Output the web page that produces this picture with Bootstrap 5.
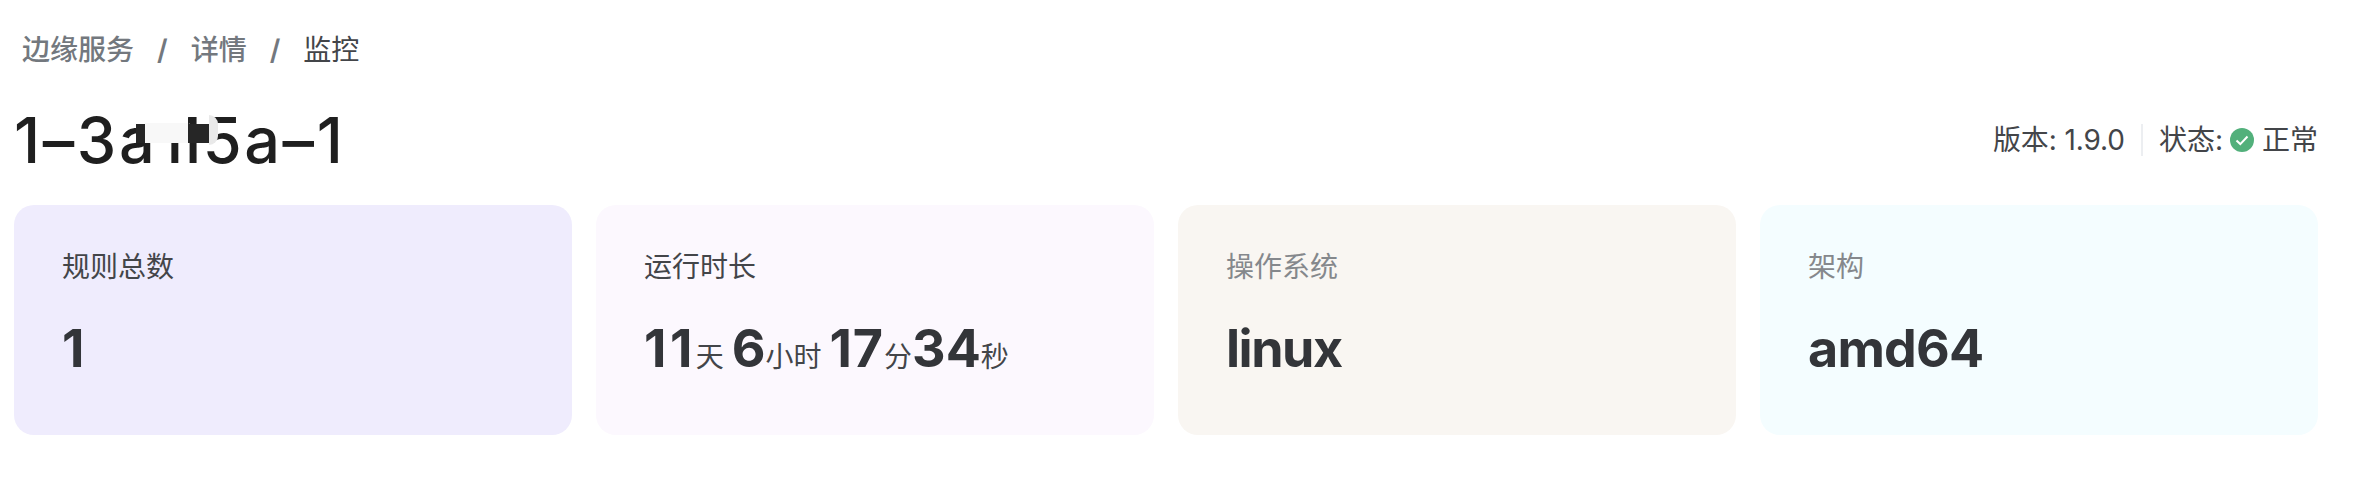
<!DOCTYPE html>
<html lang="zh">
<head>
<meta charset="utf-8">
<title>监控</title>
<link href="https://cdn.jsdelivr.net/npm/bootstrap@5.3.0/dist/css/bootstrap.min.css" rel="stylesheet">
<style>
body{background:#fff;font-family:Inter,"Noto Sans CJK SC",sans-serif;color:#434549;overflow:hidden;font-weight:400}
.page-wrap{padding:34px 38px 0 14px}
.crumbs{--bs-breadcrumb-margin-bottom:0;--bs-breadcrumb-item-padding-x:23px;font-size:28px;line-height:32px;padding-left:8px;font-weight:500}
.crumbs .breadcrumb-item a{color:#73787e;text-decoration:none}
.crumbs .breadcrumb-item.active{color:#434549;font-weight:400}
.crumbs .breadcrumb-item+.breadcrumb-item::before{content:"/";font-weight:600;color:#73787e}
.title-row{margin-top:37px;height:74px;margin-bottom:28px}
.page-title{font-size:63px;font-weight:500;color:#1f1f1f;margin:0;line-height:74px;position:relative;font-kerning:none;letter-spacing:2.6px}
.pull-a{letter-spacing:-8px}
.pull-b{letter-spacing:1px}
.mask-piece{position:absolute;display:block;top:21px;height:19px}
.mask-light{left:131px;top:12px;width:43px;height:28px;background:linear-gradient(#fff 30%,#f8f8f8 30%)}
.mask-dark-l{left:122px;width:11px;background:#262626}
.mask-dark-r{left:174px;width:21px;background:#262626}
.mask-edge{left:195px;top:12px;width:9px;height:30px;background:#e9e9e9;border-radius:0 9px 9px 0}
.meta-line{font-size:28px;line-height:40px}
.meta-ver{letter-spacing:-.1px}
.meta-sep{width:2px;height:32px;background:#eceef1;margin:0 16px}
.status-dot{width:24px;height:24px;margin:0 8px 0 7px}
.stat-tile{height:230px;border-radius:20px;padding:42px 48px 0}
.tile-label{font-size:28px;line-height:40px}
.tile-label.muted{color:#85888c}
.tile-value{font-size:52px;font-weight:700;line-height:64px;margin-top:30px;color:#333539;white-space:nowrap;font-kerning:none}
.tile-unit{font-size:28px;font-weight:400;color:#434549}
.wide-num{letter-spacing:3.5px}
.wide-sm{letter-spacing:1px}
.tight-a{letter-spacing:-1.5px}
.tight-b{letter-spacing:-.8px}
.tile-a{background:#efecfd}.tile-b{background:#fcf8fe}.tile-c{background:#f9f6f2}.tile-d{background:#f4fdff}
</style>
</head>
<body>
<div class="page-wrap">
  <nav aria-label="breadcrumb">
    <ol class="breadcrumb crumbs">
      <li class="breadcrumb-item"><a href="#">边缘服务</a></li>
      <li class="breadcrumb-item"><a href="#">详情</a></li>
      <li class="breadcrumb-item active" aria-current="page">监控</li>
    </ol>
  </nav>
  <div class="d-flex justify-content-between align-items-center title-row">
    <h1 class="page-title">1–3a<span class="pull-a">1</span><span class="pull-b">1</span>5a–1<span class="mask-piece mask-dark-l"></span><span class="mask-piece mask-light"></span><span class="mask-piece mask-dark-r"></span><span class="mask-piece mask-edge"></span></h1>
    <div class="d-flex align-items-center meta-line">
      <span class="meta-ver">版本: 1.9.0</span>
      <span class="meta-sep"></span>
      <span>状态:</span>
      <svg class="status-dot" viewBox="0 0 24 24"><circle cx="12" cy="12" r="12" fill="#52b07b"/><path d="M6.5 12.5l3.8 3.6 7.2-7.6" fill="none" stroke="#fff" stroke-width="2"/></svg>
      <span>正常</span>
    </div>
  </div>
  <div class="row row-cols-4 g-4">
    <div class="col"><div class="stat-tile tile-a"><div class="tile-label">规则总数</div><div class="tile-value">1</div></div></div>
    <div class="col"><div class="stat-tile tile-b"><div class="tile-label">运行时长</div><div class="tile-value"><span class="wide-num">11</span><span class="tile-unit">天 </span>6<span class="tile-unit">小时 </span><span class="wide-sm">17</span><span class="tile-unit">分</span>34<span class="tile-unit">秒</span></div></div></div>
    <div class="col"><div class="stat-tile tile-c"><div class="tile-label muted">操作系统</div><div class="tile-value tight-a">linux</div></div></div>
    <div class="col"><div class="stat-tile tile-d"><div class="tile-label muted">架构</div><div class="tile-value tight-b">amd64</div></div></div>
  </div>
</div>
<script src="https://cdn.jsdelivr.net/npm/bootstrap@5.3.0/dist/js/bootstrap.bundle.min.js"></script>
</body>
</html>
